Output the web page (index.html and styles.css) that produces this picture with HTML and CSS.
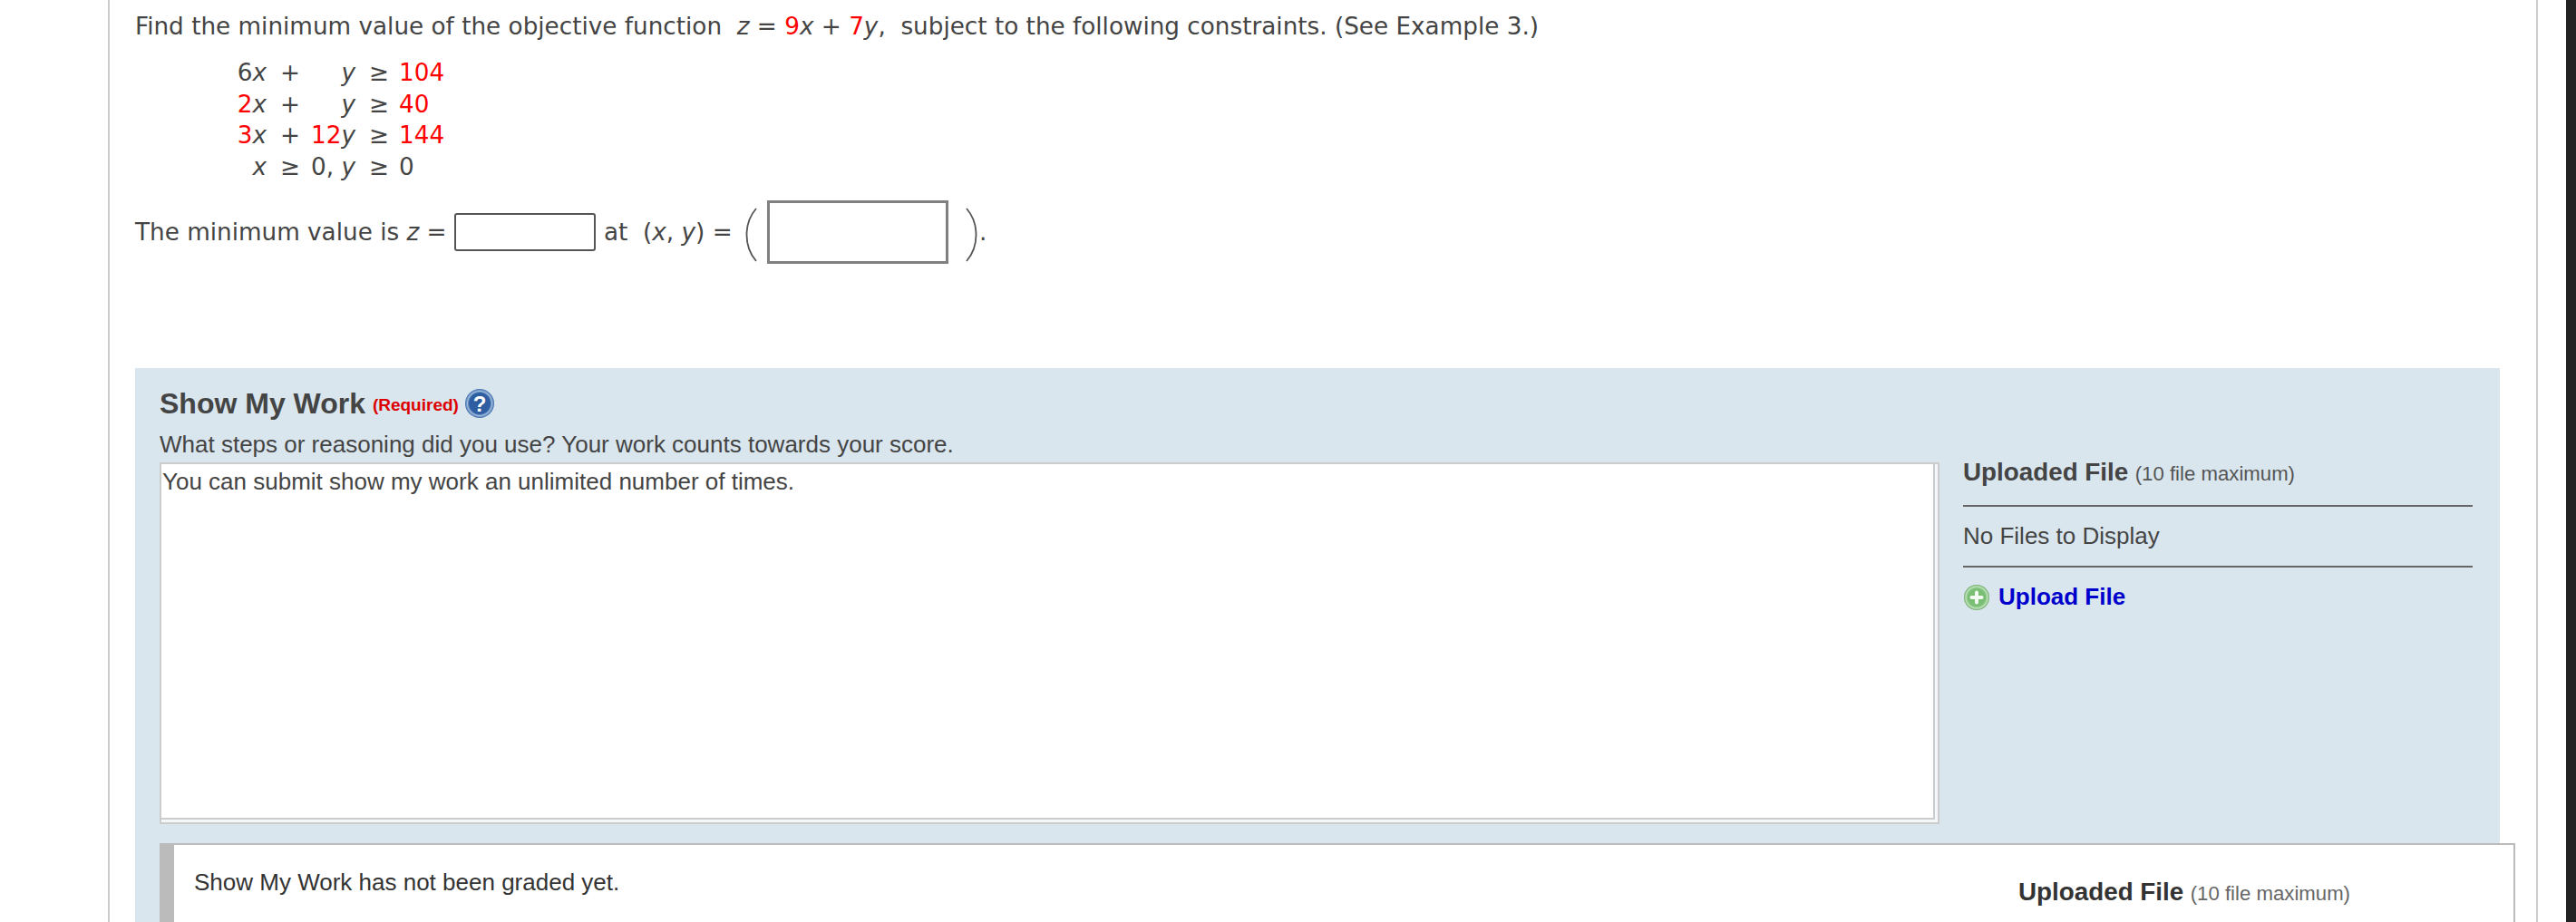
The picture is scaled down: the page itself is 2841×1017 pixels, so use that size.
FILE: index.html
```html
<!DOCTYPE html>
<html lang="en">
<head>
<meta charset="utf-8">
<title>Show My Work</title>
<link rel="stylesheet" href="styles.css">
</head>
<body>
<div class="page">
  <main class="sheet">
    <section class="question">
      <p class="prompt">Find the minimum value of the objective function&nbsp; <i>z</i> = <span class="red">9</span><i>x</i> + <span class="red">7</span><i>y</i>,&nbsp; subject to the following constraints. (See Example 3.)</p>
      <div class="system">
        <span class="c1">6<i>x</i></span><span class="c2">+</span><span class="c3"><i>y</i></span><span class="c4">≥</span><span class="c5 red">104</span>
        <span class="c1"><span class="red">2</span><i>x</i></span><span class="c2">+</span><span class="c3"><i>y</i></span><span class="c4">≥</span><span class="c5 red">40</span>
        <span class="c1"><span class="red">3</span><i>x</i></span><span class="c2">+</span><span class="c3"><span class="red">12</span><i>y</i></span><span class="c4">≥</span><span class="c5 red">144</span>
        <span class="c1"><i>x</i></span><span class="c2">≥</span><span class="c3">0, <i>y</i></span><span class="c4">≥</span><span class="c5">0</span>
      </div>
      <div class="answer">
        <span class="lbl-a">The minimum value is <i>z</i> =</span>
        <span class="input-z"></span>
        <span class="lbl-b">at&nbsp; (<i>x</i>, <i>y</i>) =</span>
        <svg class="paren-l" viewBox="0 0 13 60" aria-hidden="true"><path d="M12 1C-2 17 -2 43 12 59" fill="none" stroke="#555" stroke-width="1.8"/></svg>
        <span class="input-xy"></span>
        <svg class="paren-r" viewBox="0 0 13 60" aria-hidden="true"><path d="M1 1C15 17 15 43 1 59" fill="none" stroke="#555" stroke-width="1.8"/></svg>
        <span class="dot">.</span>
      </div>
    </section>

    <section class="panel">
      <h2 class="smw-title">Show My Work <span class="req">(Required)</span>
        <svg class="help" viewBox="0 0 32 32" aria-hidden="true">
          <defs><radialGradient id="hb" cx="50%" cy="50%" r="50%"><stop offset="0" stop-color="#2c5a9c"/><stop offset="0.72" stop-color="#2f5fa3"/><stop offset="0.84" stop-color="#9dbadb"/><stop offset="1" stop-color="#3a6aab"/></radialGradient></defs>
          <circle cx="16" cy="16" r="16" fill="url(#hb)"/>
          <text x="16" y="24.5" text-anchor="middle" class="help-q">?</text>
        </svg>
      </h2>
      <p class="smw-hint">What steps or reasoning did you use? Your work counts towards your score.</p>
      <div class="smw-cols">
        <div class="ta-outer"><div class="ta-inner">You can submit show my work an unlimited number of times.</div></div>
        <aside class="files">
          <div class="files-head"><b>Uploaded File</b> <small>(10 file maximum)</small></div>
          <div class="files-empty">No Files to Display</div>
          <a class="upload" href="#">
            <svg class="plus" viewBox="0 0 28 28" aria-hidden="true">
              <defs><radialGradient id="gb" cx="50%" cy="50%" r="50%"><stop offset="0" stop-color="#72bb6c"/><stop offset="0.7" stop-color="#7cc077"/><stop offset="0.86" stop-color="#bfe2ba"/><stop offset="1" stop-color="#6aa865"/></radialGradient></defs>
              <circle cx="14" cy="14" r="14" fill="url(#gb)"/>
              <path d="M14 8.5v11M8.5 14h11" stroke="#f3faf2" stroke-width="4" stroke-linecap="round"/>
            </svg>
            <span>Upload File</span>
          </a>
        </aside>
      </div>
      <div class="graded">
        <p class="graded-msg">Show My Work has not been graded yet.</p>
        <div class="graded-files"><b>Uploaded File</b> <small>(10 file maximum)</small></div>
      </div>
    </section>
  </main>
  <div class="scrollbar"></div>
</div>
</body>
</html>
```

FILE: styles.css
```css
html, body { margin: 0; padding: 0; height: 100%; overflow: hidden; background: #fff; }
p, h2 { margin: 0; }
.page { display: flex; height: 1017px; overflow: hidden; padding-left: 119px; box-sizing: border-box; }
.sheet { width: 2680px; border-left: 2px solid #ccc; border-right: 2px solid #ccc; box-sizing: border-box; flex: none; }
.scrollbar { width: 11px; margin-left: auto; background: #222; flex: none; }
.question { font-family: "DejaVu Sans", Verdana, sans-serif; font-size: 26.25px; color: #444; padding: 0 0 0 28px; height: 406px; }
.red { color: #f00; }
i { font-style: italic; }
.prompt { line-height: 30px; padding-top: 14px; white-space: nowrap; }
.system { display: grid; grid-template-columns: 50px 17px 51px 18px auto; column-gap: 15px; justify-content: start; margin: 19px 0 0 95px; line-height: 34.5px; white-space: nowrap; width: max-content; }
.c1, .c3 { text-align: right; }
.c2, .c4 { text-align: center; }
.answer { display: flex; align-items: center; margin-top: 20px; height: 70px; white-space: nowrap; }
.lbl-a { width: 352px; }
.input-z { width: 156px; height: 42px; box-sizing: border-box; border: 2px solid #555; border-radius: 3px; background: #fff; }
.lbl-b { margin-left: 9px; width: 156px; }
.paren-l { width: 13px; height: 60px; margin-top: 6px; }
.input-xy { width: 200px; height: 70px; margin-left: 11px; box-sizing: border-box; border: 3px solid #808080; background: #fff; }
.paren-r { width: 13px; height: 60px; margin: 6px 0 0 19px; }
.dot { margin-left: 2px; }
.panel { margin: 0 40px 0 28px; padding: 0 30px 0 27px; background: #d9e6ee; font-family: "Liberation Sans", Arial, sans-serif; color: #444; height: 700px; }
.smw-title { display: flex; align-items: center; font-size: 32px; font-weight: bold; line-height: 38px; padding-top: 17px; white-space: pre; color: #444; }
.req { font-size: 19px; color: #d00; margin: 5px 0 0 -1px; }
.help { width: 32px; height: 32px; margin-left: 7px; }
.help-q { font-family: "Liberation Sans", sans-serif; font-weight: bold; font-size: 24px; fill: #fff; }
.smw-hint { font-size: 26px; line-height: 30px; margin-top: 9px; white-space: nowrap; }
.smw-cols { display: flex; gap: 26px; margin-top: 5px; }
.ta-outer { width: 1963px; height: 399px; box-sizing: border-box; border: 2px solid #ccc; background: #f5f8fa; padding: 0 3px 3px 0; flex: none; }
.ta-inner { height: 100%; box-sizing: border-box; background: #fff; border-right: 2px solid #ccc; border-bottom: 2px solid #ccc; padding-left: 1px; font-size: 26px; line-height: 38px; }
.files { flex: 1; }
.files-head { height: 46px; padding-top: 1px; line-height: 20px; border-bottom: 2px solid #666; white-space: nowrap; }
.files-head b, .graded-files b { font-size: 27.8px; line-height: 20px; }
.files-head small, .graded-files small { font-size: 22.2px; color: #555; margin-left: 3px; }
.files-empty { height: 65px; line-height: 65px; border-bottom: 2px solid #666; font-size: 26px; }
.upload { display: flex; align-items: center; gap: 10px; margin: 17px 0 0 1px; color: #00c; text-decoration: none; font-size: 26px; font-weight: bold; }
.plus { width: 28px; height: 28px; flex: none; }
.graded { display: flex; margin: 21px -47px 0 0; height: 200px; background: #fff; box-sizing: border-box; border-top: 2px solid #bbb; border-right: 2px solid #bbb; border-left: 16px solid #bbb; color: #333; }
.graded-msg { width: 2034px; padding: 26px 0 0 22px; box-sizing: border-box; font-size: 26px; line-height: 30px; flex: none; }
.graded-files { padding-top: 42px; line-height: 20px; white-space: nowrap; }
.graded-files small { color: #666; }
```
